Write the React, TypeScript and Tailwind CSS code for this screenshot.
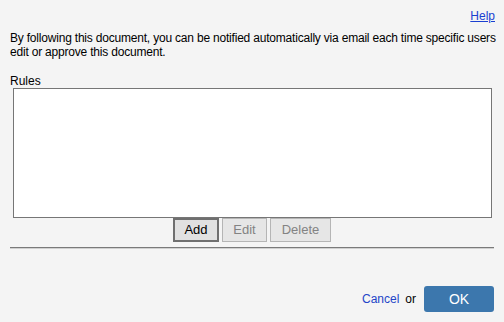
import React from 'react';

export default function App() {
  return (
    <div className="w-[504px] h-[322px] bg-[#f4f4f4] text-[12px] leading-[14px] text-black font-['Liberation_Sans',Arial,sans-serif] overflow-hidden">
      <div className="flex justify-end pt-[9px] pr-[9px]">
        <a href="#" className="text-[#1a3fd1] underline">Help</a>
      </div>
      <p className="mt-[8px] pl-[10px] whitespace-nowrap tracking-[-0.2px]">
        By following this document, you can be notified automatically via email each time specific users
        <br />
        edit or approve this document.
      </p>
      <div className="mt-[15px] pl-[10px]">Rules</div>
      <div className="ml-[13px] mr-[12px] h-[130px] bg-white border border-[#767676]" />
      <div className="flex justify-center gap-[3px]">
        <button className="w-[46px] h-[24px] bg-[#e1e1e1] border-2 border-[#6f6f6f] text-[13px] text-black">Add</button>
        <button className="w-[45px] h-[24px] bg-[#e6e6e6] border border-[#b5b5b5] text-[13px] text-[#838383]">Edit</button>
        <button className="w-[61px] h-[24px] bg-[#e6e6e6] border border-[#b5b5b5] text-[13px] text-[#838383]">Delete</button>
      </div>
      <div className="mx-[10px] mt-[5px] h-[2px] bg-[#7a7a7a] border-b border-[#d0d0d0]" />
      <div className="flex justify-end items-center gap-[6px] mt-[37px] pr-[10px]">
        <a href="#" className="text-[#2345c8]">Cancel</a>
        <span>or</span>
        <button className="ml-[2px] w-[70px] h-[26px] rounded-[3px] bg-[#3c77ad] text-white text-[14px]">OK</button>
      </div>
    </div>
  );
}
